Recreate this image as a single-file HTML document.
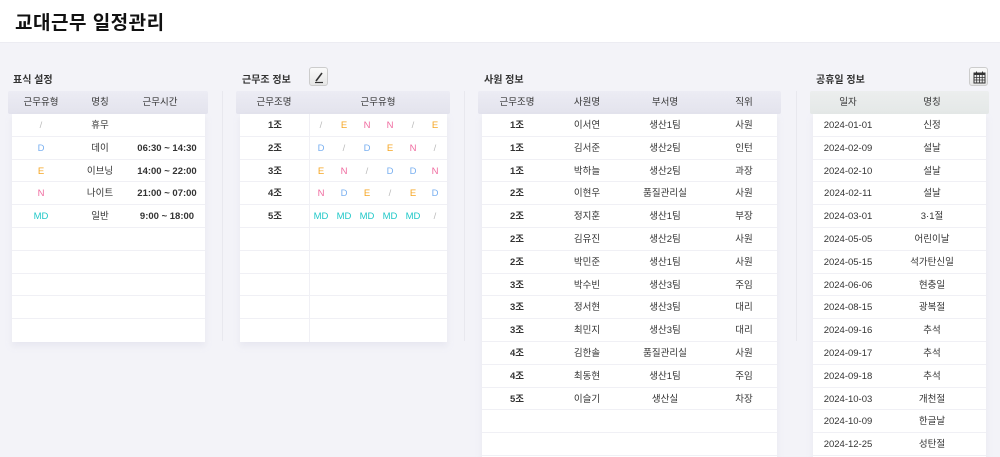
<!DOCTYPE html>
<html><head><meta charset="utf-8">
<style>
*{margin:0;padding:0;box-sizing:border-box}
html{width:1000px;height:457px;overflow:hidden}
body{width:1000px;height:457px;overflow:hidden;background:#f3f3f8;font-family:"Liberation Sans","Noto Sans CJK KR",sans-serif;color:#333;position:relative}
.top{position:absolute;left:0;top:0;width:1000px;height:43px;background:#fff;border-bottom:1px solid #ececf2}
.top h1{position:absolute;left:15px;top:8px;font-size:19px;font-weight:bold;color:#111;letter-spacing:0.5px}
.t{position:absolute;font-size:10px;font-weight:bold;color:#333;top:71px}
.hd{position:absolute;top:91px;height:23px;background:linear-gradient(#ececf4,#e3e3ed);border-radius:2px}
.hd span,.row span{position:absolute;top:0;line-height:23px;font-size:9.5px;transform:translateX(-50%);white-space:nowrap}
.hd span{color:#333}
.body{position:absolute;top:114px;background:#fff;box-shadow:0 4px 6px rgba(200,200,220,0.25);overflow:hidden}
.row{position:absolute;left:0;right:0;height:22.8px;border-bottom:1px solid #f0f0f5}
.sep{position:absolute;top:91px;width:1px;height:250px;background:#e8e8ee}
.b{font-weight:bold}
.D{color:#7ab0f0}.E{color:#f5a623}.N{color:#f06ca0}.M{color:#20c8c8}.S{color:#bbb}
.btn{position:absolute;top:67px;width:19px;height:19px;border:1px solid #ccc;border-radius:3px;background:linear-gradient(#fafafa,#e6e6e6)}
</style></head><body>
<div class="top"><h1>교대근무 일정관리</h1></div>

<div class="t" style="left:13px">표식 설정</div>
<div class="t" style="left:242px">근무조 정보</div>
<div class="btn" style="left:309px"><svg width="19" height="19" viewBox="0 0 19 19"><path d="M6 13 L12 5" stroke="#333" stroke-width="1.6" fill="none"/><path d="M5 14.5 H13" stroke="#333" stroke-width="1.2"/></svg></div>
<div class="t" style="left:484px">사원 정보</div>
<div class="t" style="left:816px">공휴일 정보</div>
<div class="btn" style="left:969px"><svg width="19" height="19" viewBox="0 0 19 19"><rect x="4" y="5" width="11" height="10" fill="none" stroke="#333" stroke-width="1"/><rect x="4" y="5" width="11" height="2" fill="#333"/><path d="M4 9.5H15M4 12H15M6.7 7V15M9.5 7V15M12.2 7V15" stroke="#333" stroke-width="0.8"/><path d="M6.5 3.5V5.5M12.5 3.5V5.5" stroke="#333" stroke-width="1"/></svg></div>

<div class="sep" style="left:222px"></div>
<div class="sep" style="left:464px"></div>
<div class="sep" style="left:796px"></div>

<div class="hd" style="left:8px;width:200px"><span style="left:33px">근무유형</span><span style="left:92px">명칭</span><span style="left:152px">근무시간</span></div>
<div class="body" style="left:12px;width:193px;height:228px">
<div class="row" style="top:0"><span class="S" style="left:29px">/</span><span style="left:88px">휴무</span></div>
<div class="row" style="top:22.8px"><span class="D" style="left:29px">D</span><span style="left:88px">데이</span><span class="b" style="left:155px">06:30 ~ 14:30</span></div>
<div class="row" style="top:45.6px"><span class="E" style="left:29px">E</span><span style="left:88px">이브닝</span><span class="b" style="left:155px">14:00 ~ 22:00</span></div>
<div class="row" style="top:68.4px"><span class="N" style="left:29px">N</span><span style="left:88px">나이트</span><span class="b" style="left:155px">21:00 ~ 07:00</span></div>
<div class="row" style="top:91.2px"><span class="M" style="left:29px">MD</span><span style="left:88px">일반</span><span class="b" style="left:155px">9:00 ~ 18:00</span></div>
<div class="row" style="top:114px"></div><div class="row" style="top:136.8px"></div><div class="row" style="top:159.6px"></div><div class="row" style="top:182.4px"></div><div class="row" style="top:205.2px;border:0"></div>
</div>

<div class="hd" style="left:236px;width:214px"><span style="left:38px">근무조명</span><span style="left:142px">근무유형</span></div>
<div class="body" style="left:240px;width:207px;height:228px">
<div style="position:absolute;left:69px;top:0;width:1px;height:228px;background:#f0f0f5"></div>
<div class="row" style="top:0"><span class="b" style="left:35px">1조</span><span class="S" style="left:81px">/</span><span class="E" style="left:104px">E</span><span class="N" style="left:127px">N</span><span class="N" style="left:150px">N</span><span class="S" style="left:173px">/</span><span class="E" style="left:195px">E</span></div>
<div class="row" style="top:22.8px"><span class="b" style="left:35px">2조</span><span class="D" style="left:81px">D</span><span class="S" style="left:104px">/</span><span class="D" style="left:127px">D</span><span class="E" style="left:150px">E</span><span class="N" style="left:173px">N</span><span class="S" style="left:195px">/</span></div>
<div class="row" style="top:45.6px"><span class="b" style="left:35px">3조</span><span class="E" style="left:81px">E</span><span class="N" style="left:104px">N</span><span class="S" style="left:127px">/</span><span class="D" style="left:150px">D</span><span class="D" style="left:173px">D</span><span class="N" style="left:195px">N</span></div>
<div class="row" style="top:68.4px"><span class="b" style="left:35px">4조</span><span class="N" style="left:81px">N</span><span class="D" style="left:104px">D</span><span class="E" style="left:127px">E</span><span class="S" style="left:150px">/</span><span class="E" style="left:173px">E</span><span class="D" style="left:195px">D</span></div>
<div class="row" style="top:91.2px"><span class="b" style="left:35px">5조</span><span class="M" style="left:81px">MD</span><span class="M" style="left:104px">MD</span><span class="M" style="left:127px">MD</span><span class="M" style="left:150px">MD</span><span class="M" style="left:173px">MD</span><span class="S" style="left:195px">/</span></div>
<div class="row" style="top:114px"></div><div class="row" style="top:136.8px"></div><div class="row" style="top:159.6px"></div><div class="row" style="top:182.4px"></div><div class="row" style="top:205.2px;border:0"></div>
</div>

<div class="hd" style="left:478px;width:303px"><span style="left:39px">근무조명</span><span style="left:109px">사원명</span><span style="left:187px">부서명</span><span style="left:266px">직위</span></div>
<div class="body" style="left:482px;width:295px;height:343px">
<div class="row" style="top:0"><span class="b" style="left:35px">1조</span><span style="left:105px">이서연</span><span style="left:183px">생산1팀</span><span style="left:262px">사원</span></div>
<div class="row" style="top:22.8px"><span class="b" style="left:35px">1조</span><span style="left:105px">김서준</span><span style="left:183px">생산2팀</span><span style="left:262px">인턴</span></div>
<div class="row" style="top:45.6px"><span class="b" style="left:35px">1조</span><span style="left:105px">박하늘</span><span style="left:183px">생산2팀</span><span style="left:262px">과장</span></div>
<div class="row" style="top:68.4px"><span class="b" style="left:35px">2조</span><span style="left:105px">이현우</span><span style="left:183px">품질관리실</span><span style="left:262px">사원</span></div>
<div class="row" style="top:91.2px"><span class="b" style="left:35px">2조</span><span style="left:105px">정지훈</span><span style="left:183px">생산1팀</span><span style="left:262px">부장</span></div>
<div class="row" style="top:114px"><span class="b" style="left:35px">2조</span><span style="left:105px">김유진</span><span style="left:183px">생산2팀</span><span style="left:262px">사원</span></div>
<div class="row" style="top:136.8px"><span class="b" style="left:35px">2조</span><span style="left:105px">박민준</span><span style="left:183px">생산1팀</span><span style="left:262px">사원</span></div>
<div class="row" style="top:159.6px"><span class="b" style="left:35px">3조</span><span style="left:105px">박수빈</span><span style="left:183px">생산3팀</span><span style="left:262px">주임</span></div>
<div class="row" style="top:182.4px"><span class="b" style="left:35px">3조</span><span style="left:105px">정서현</span><span style="left:183px">생산3팀</span><span style="left:262px">대리</span></div>
<div class="row" style="top:205.2px"><span class="b" style="left:35px">3조</span><span style="left:105px">최민지</span><span style="left:183px">생산3팀</span><span style="left:262px">대리</span></div>
<div class="row" style="top:228px"><span class="b" style="left:35px">4조</span><span style="left:105px">김한솔</span><span style="left:183px">품질관리실</span><span style="left:262px">사원</span></div>
<div class="row" style="top:250.8px"><span class="b" style="left:35px">4조</span><span style="left:105px">최동현</span><span style="left:183px">생산1팀</span><span style="left:262px">주임</span></div>
<div class="row" style="top:273.6px"><span class="b" style="left:35px">5조</span><span style="left:105px">이슬기</span><span style="left:183px">생산실</span><span style="left:262px">차장</span></div>
<div class="row" style="top:296.4px"></div><div class="row" style="top:319.2px"></div>
</div>

<div class="hd" style="left:810px;width:179px;background:linear-gradient(#eceeee,#e4e8e7)"><span style="left:38px">일자</span><span style="left:122px">명칭</span></div>
<div class="body" style="left:813px;width:173px;height:343px">
<div class="row" style="top:0"><span style="left:35px">2024-01-01</span><span style="left:119px">신정</span></div>
<div class="row" style="top:22.8px"><span style="left:35px">2024-02-09</span><span style="left:119px">설날</span></div>
<div class="row" style="top:45.6px"><span style="left:35px">2024-02-10</span><span style="left:119px">설날</span></div>
<div class="row" style="top:68.4px"><span style="left:35px">2024-02-11</span><span style="left:119px">설날</span></div>
<div class="row" style="top:91.2px"><span style="left:35px">2024-03-01</span><span style="left:119px">3·1절</span></div>
<div class="row" style="top:114px"><span style="left:35px">2024-05-05</span><span style="left:119px">어린이날</span></div>
<div class="row" style="top:136.8px"><span style="left:35px">2024-05-15</span><span style="left:119px">석가탄신일</span></div>
<div class="row" style="top:159.6px"><span style="left:35px">2024-06-06</span><span style="left:119px">현충일</span></div>
<div class="row" style="top:182.4px"><span style="left:35px">2024-08-15</span><span style="left:119px">광복절</span></div>
<div class="row" style="top:205.2px"><span style="left:35px">2024-09-16</span><span style="left:119px">추석</span></div>
<div class="row" style="top:228px"><span style="left:35px">2024-09-17</span><span style="left:119px">추석</span></div>
<div class="row" style="top:250.8px"><span style="left:35px">2024-09-18</span><span style="left:119px">추석</span></div>
<div class="row" style="top:273.6px"><span style="left:35px">2024-10-03</span><span style="left:119px">개천절</span></div>
<div class="row" style="top:296.4px"><span style="left:35px">2024-10-09</span><span style="left:119px">한글날</span></div>
<div class="row" style="top:319.2px"><span style="left:35px">2024-12-25</span><span style="left:119px">성탄절</span></div>
</div>
</body></html>
